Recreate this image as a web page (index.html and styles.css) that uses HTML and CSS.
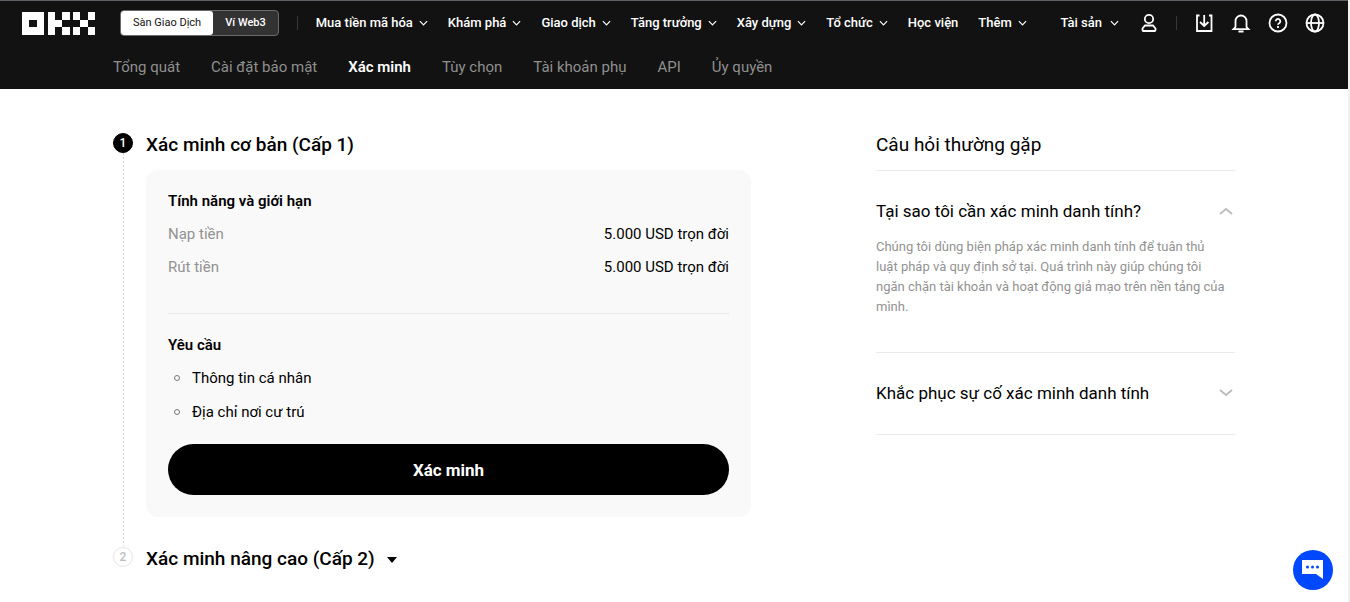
FILE: index.html
```html
<!DOCTYPE html>
<html lang="vi">
<head>
<meta charset="UTF-8">
<meta name="viewport" content="width=device-width, initial-scale=1">
<title>Xác minh</title>
<link rel="stylesheet" href="styles.css">
</head>
<body>
<svg class="sprite" aria-hidden="true">
    <symbol id="chevron" viewBox="0 0 10 6"><path d="M1 1l4 4 4-4" fill="none" stroke="currentColor" stroke-width="1.3"/></symbol>
    <symbol id="arrow" viewBox="0 0 14 8"><path d="M1 1l6 5 6-5" fill="none" stroke="currentColor" stroke-width="2"/></symbol>
</svg>
<header class="header">
    <nav class="topbar">
        <a class="logo" href="#" aria-label="OKX">
            <svg width="74" height="23" viewBox="0 0 74 23" fill="#fff">
                <path fill-rule="evenodd" d="M0 0h22v23H0zM7 8v7h8V8z"/>
                <path d="M26 0h7v8h7v7h-7v8h-7zM40 0h8v8h-8zM40 15h8v8h-8z"/>
                <path d="M51 0h7v8h-7zM66 0h7v8h-7zM58 8h8v7h-8zM51 15h7v8h-7zM66 15h7v8h-7z"/>
            </svg>
        </a>
        <div class="switch">
            <button class="switch-item active" type="button">Sàn Giao Dịch</button>
            <button class="switch-item" type="button">Ví Web3</button>
        </div>
        <span class="divider"></span>
        <div class="menu">
            <a href="#">Mua tiền mã hóa <svg class="chevron"><use href="#chevron"/></svg></a>
            <a href="#">Khám phá <svg class="chevron"><use href="#chevron"/></svg></a>
            <a href="#">Giao dịch <svg class="chevron"><use href="#chevron"/></svg></a>
            <a href="#">Tăng trưởng <svg class="chevron"><use href="#chevron"/></svg></a>
            <a href="#">Xây dựng <svg class="chevron"><use href="#chevron"/></svg></a>
            <a href="#">Tổ chức <svg class="chevron"><use href="#chevron"/></svg></a>
            <a href="#">Học viện</a>
            <a href="#">Thêm <svg class="chevron"><use href="#chevron"/></svg></a>
        </div>
        <div class="tools">
            <a class="assets" href="#">Tài sản <svg class="chevron"><use href="#chevron"/></svg></a>
            <button class="icon" type="button" aria-label="Tài khoản">
                <svg width="20" height="20" viewBox="0 0 20 20"><circle cx="10" cy="6" r="4.200"/><path d="M6 12.500h8l2.500 3v1.500q0 1-1 1h-11q-1 0-1-1v-1.500z"/></svg>
            </button>
            <span class="divider"></span>
            <button class="icon" type="button" aria-label="Tải xuống">
                <svg width="20" height="20" viewBox="0 0 20 20"><path d="M5.500 2.500H3v15.500h14.500V2.500H15M10.200 2v11M6 9l4.200 4 4.200-4"/></svg>
            </button>
            <button class="icon" type="button" aria-label="Thông báo">
                <svg width="20" height="20" viewBox="0 0 20 20"><path d="M2.500 16.200L4.500 14V8a5.500 5.500 0 0 1 11 0v6l2 2.200zM7.500 18.500h5"/></svg>
            </button>
            <button class="icon" type="button" aria-label="Trợ giúp">
                <svg width="20" height="20" viewBox="0 0 20 20"><circle cx="10" cy="10" r="8.500"/><path d="M7.700 8.200a2.300 2.300 0 1 1 3.500 2q-1.200.6-1.200 1.600M10 13v2"/></svg>
            </button>
            <button class="icon" type="button" aria-label="Ngôn ngữ">
                <svg width="20" height="20" viewBox="0 0 20 20"><circle cx="10" cy="10" r="8.500"/><ellipse cx="10" cy="10" rx="4" ry="8.500"/><path d="M1.500 10h17"/></svg>
            </button>
        </div>
    </nav>
    <nav class="tabs">
        <a href="#">Tổng quát</a>
        <a href="#">Cài đặt bảo mật</a>
        <a class="active" href="#">Xác minh</a>
        <a href="#">Tùy chọn</a>
        <a href="#">Tài khoản phụ</a>
        <a href="#">API</a>
        <a href="#">Ủy quyền</a>
    </nav>
</header>

<main class="content">
    <section class="steps">
        <div class="step">
            <div class="rail">
                <span class="num active">1</span>
                <span class="line"></span>
            </div>
            <div class="step-body">
                <h2>Xác minh cơ bản (Cấp 1)</h2>
                <div class="card">
                    <h3>Tính năng và giới hạn</h3>
                    <dl class="limits">
                        <div><dt>Nạp tiền</dt><dd>5.000 USD trọn đời</dd></div>
                        <div><dt>Rút tiền</dt><dd>5.000 USD trọn đời</dd></div>
                    </dl>
                    <h3>Yêu cầu</h3>
                    <ul class="needs">
                        <li>Thông tin cá nhân</li>
                        <li>Địa chỉ nơi cư trú</li>
                    </ul>
                    <button class="verify" type="button">Xác minh</button>
                </div>
            </div>
        </div>
        <div class="step">
            <div class="rail">
                <span class="num">2</span>
            </div>
            <div class="step-body">
                <h2>Xác minh nâng cao (Cấp 2) <svg class="caret" viewBox="0 0 10 6"><path d="M0 0h10L5 6z"/></svg></h2>
            </div>
        </div>
    </section>

    <aside class="faq">
        <h2>Câu hỏi thường gặp</h2>
        <div class="faq-item">
            <button class="question" type="button" aria-expanded="true">Tại sao tôi cần xác minh danh tính? <svg class="arrow up"><use href="#arrow"/></svg></button>
            <p>Chúng tôi dùng biện pháp xác minh danh tính để tuân thủ<br>
            luật pháp và quy định sở tại. Quá trình này giúp chúng tôi<br>
            ngăn chặn tài khoản và hoạt động giả mạo trên nền tảng của<br>
            mình.</p>
        </div>
        <div class="faq-item">
            <button class="question" type="button" aria-expanded="false">Khắc phục sự cố xác minh danh tính <svg class="arrow"><use href="#arrow"/></svg></button>
        </div>
    </aside>
</main>

<button class="chat" type="button" aria-label="Hỗ trợ">
    <svg width="22" height="20" viewBox="0 0 22 20"><path fill="#fff" d="M0 0h21v19l-7-5H0z"/><g fill="#0048ff"><circle cx="5.500" cy="7" r="1.500"/><circle cx="10.500" cy="7" r="1.500"/><circle cx="15.500" cy="7" r="1.500"/></g></svg>
</button>
</body>
</html>
```
FILE: styles.css
```css
* {
    box-sizing: border-box;
}
body {
    margin: 0;
    min-height: 100vh;
    border-right: 2px solid #f1f1f1;
    background: #fff;
    color: #000;
    font-family: Roboto, "Noto Sans", sans-serif;
    font-size: 15px;
    line-height: 20px;
}
h2, h3, p, ul, dl, dd {
    margin: 0;
    padding: 0;
}
a {
    color: inherit;
    text-decoration: none;
}
button {
    padding: 0;
    border: 0;
    background: none;
    color: inherit;
    font: inherit;
    cursor: pointer;
}
svg {
    flex: none;
}
.sprite {
    display: none;
}

/* header */
.header {
    background: #121212;
    border-top: 1px solid #5f6063;
    color: #fff;
}
.topbar {
    display: flex;
    align-items: center;
    height: 44px;
    padding: 0 23px 0 22px;
    font-size: 13px;
    font-weight: 500;
    white-space: nowrap;
}
.logo {
    display: flex;
    margin-right: 24px;
}
.switch {
    display: flex;
    height: 26px;
    border: 1px solid #6b6b6b;
    border-radius: 4px;
    background: #333;
    font-size: 11px;
}
.switch-item {
    padding: 0 12px;
    border-radius: 3px;
}
.switch-item.active {
    background: #fff;
    color: #121212;
    font-weight: 400;
}
.divider {
    width: 1px;
    height: 14px;
    margin: 0 18px;
    background: #383838;
}
.menu {
    display: flex;
    gap: 20px;
}
.menu a, .assets {
    display: flex;
    align-items: center;
    gap: 6px;
}
.chevron {
    width: 9px;
    height: 6px;
}
.tools {
    display: flex;
    align-items: center;
    margin-left: auto;
}
.tools .divider {
    margin: 0 17px;
}
.assets {
    gap: 8px;
    margin-right: 20px;
}
.icon {
    display: flex;
}
.icon + .icon {
    margin-left: 17px;
}
.icon svg {
    fill: none;
    stroke: #fff;
    stroke-width: 1.8;
}
.tabs {
    display: flex;
    align-items: center;
    gap: 31px;
    max-width: 1122px;
    height: 44px;
    margin: 0 auto;
    color: #8f8f8f;
}
.tabs .active {
    color: #fff;
    font-weight: 600;
}

/* content */
.content {
    display: flex;
    justify-content: space-between;
    max-width: 1122px;
    margin: 0 auto;
    padding-top: 43px;
}
h2 {
    font-size: 19px;
    font-weight: 500;
    line-height: 26px;
}
h3 {
    font-size: 15px;
    font-weight: 600;
}
.steps {
    width: 638px;
}
.step {
    display: flex;
    gap: 13px;
}
.rail {
    display: flex;
    flex-direction: column;
    align-items: center;
    padding-top: 1px;
}
.num {
    width: 20px;
    height: 20px;
    border: 1px solid #e5e5e5;
    border-radius: 50%;
    color: #bdbdbd;
    font-size: 12px;
    font-weight: 500;
    line-height: 18px;
    text-align: center;
}
.num.active {
    border-color: #000;
    background: #000;
    color: #fff;
}
.line {
    flex: 1;
    width: 1px;
    background: repeating-linear-gradient(#d4d4d4 0 2px, #fff 2px 4px);
}
.step-body {
    flex: 1;
}
.card {
    margin: 12px 0 29px;
    padding: 21px 22px 22px;
    border-radius: 12px;
    background: #f9f9f9;
}
.limits {
    margin-bottom: 21px;
    padding-bottom: 36px;
    border-bottom: 1px solid #e8e8e8;
}
.limits div {
    display: flex;
    justify-content: space-between;
    padding-top: 13px;
}
.limits dt {
    color: #929292;
}
.needs {
    display: grid;
    gap: 14px;
    margin-top: 13px;
    list-style: none;
}
.needs li {
    display: flex;
    align-items: center;
    gap: 12px;
    padding-left: 6px;
}
.needs li::before {
    content: "";
    width: 4px;
    height: 4px;
    border: 1px solid #777;
    border-radius: 50%;
}
.verify {
    width: 100%;
    height: 51px;
    margin-top: 22px;
    border-radius: 26px;
    background: #000;
    color: #fff;
    font-size: 17px;
    font-weight: 700;
}
.caret {
    width: 10px;
    height: 6px;
    margin-left: 8px;
    vertical-align: middle;
}

/* faq */
.faq {
    width: 359px;
}
.faq h2 {
    padding-bottom: 12px;
    border-bottom: 1px solid #ebebeb;
    font-weight: 400;
}
.faq-item {
    padding: 29px 0 30px;
    border-bottom: 1px solid #ebebeb;
}
.question {
    display: flex;
    align-items: center;
    justify-content: space-between;
    width: 100%;
    padding-right: 2px;
    font-size: 17px;
    line-height: 22px;
    text-align: left;
}
.arrow {
    width: 14px;
    height: 8px;
    color: #bdbdbd;
}
.arrow.up {
    transform: rotate(180deg);
}
.faq-item p {
    margin: 15px 0 5px;
    color: #929292;
    font-size: 13px;
}

.chat {
    position: fixed;
    right: 17px;
    bottom: 12px;
    display: flex;
    align-items: center;
    justify-content: center;
    width: 40px;
    height: 40px;
    border-radius: 50%;
    background: #0048ff;
}
```
